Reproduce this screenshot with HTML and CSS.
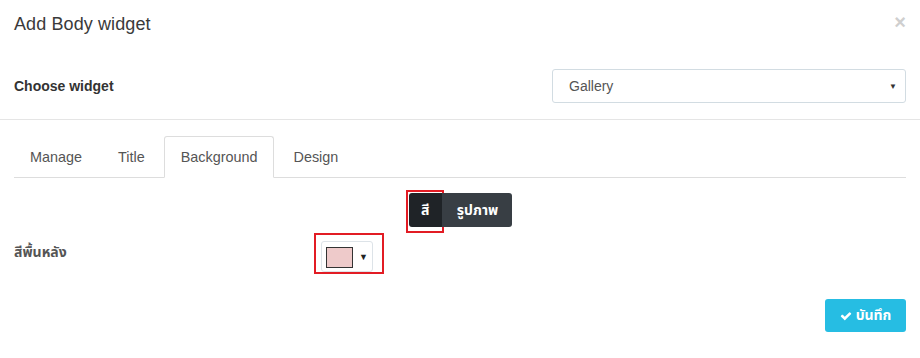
FILE: index.html
```html
<!DOCTYPE html>
<html>
<head>
<meta charset="utf-8">
<link rel="stylesheet" href="styles.css">
</head>
<body>
<div class="modal">
  <div class="header">
    <h4 class="title">Add Body widget</h4>
    <span class="close">×</span>
  </div>
  <div class="choose-row">
    <label class="label-bold">Choose widget</label>
    <div class="select"><span>Gallery</span><span class="caret">▼</span></div>
  </div>
  <div class="divider"></div>
  <div class="tab-area">
    <ul class="tabs">
      <li class="tab">Manage</li>
      <li class="tab">Title</li>
      <li class="tab active">Background</li>
      <li class="tab">Design</li>
    </ul>
    <div class="toggle-row">
      <div class="btn-group">
        <span class="btn btn-active">สี<span class="mark mark-btn"></span></span>
        <span class="btn">รูปภาพ</span>
      </div>
    </div>
    <div class="bg-row">
      <label class="label-thai">สีพื้นหลัง</label>
      <div class="picker">
        <span class="swatch"></span>
        <span class="picker-caret">▼</span>
        <span class="mark mark-picker"></span>
      </div>
    </div>
    <div class="footer">
      <button class="save"><svg class="check" viewBox="0 0 1792 1792" width="12" height="12"><path fill="#fff" d="M1671 566q0 40-28 68l-724 724-136 136q-28 28-68 28t-68-28l-136-136-362-362q-28-28-28-68t28-68l136-136q28-28 68-28t68 28l294 295 656-657q28-28 68-28t68 28l136 136q28 28 28 68z"/></svg><span>บันทึก</span></button>
    </div>
  </div>
</div>
</body>
</html>
```
FILE: styles.css
```css
* { box-sizing: border-box; }
html, body { margin: 0; padding: 0; background: #fff; }
body {
  font-family: "Liberation Sans", Arial, "Noto Sans Thai", "Tahoma", sans-serif;
  font-size: 14px;
  color: #333;
  width: 920px;
  height: 358px;
  overflow: hidden;
}
.modal { width: 920px; height: 358px; }
.header {
  display: flex;
  justify-content: space-between;
  align-items: flex-start;
  padding: 11px 14px 0 14px;
  height: 69px;
}
.title {
  margin: 0;
  font-size: 18px;
  font-weight: normal;
  line-height: 26px;
  color: #3a3a3a;
  letter-spacing: 0.1px;
}
.close {
  font-size: 20px;
  font-weight: bold;
  color: #cfcfcf;
  line-height: 21px;
  margin-top: 1px;
}
.choose-row {
  display: flex;
  justify-content: space-between;
  align-items: center;
  padding: 0 14px;
  height: 34px;
}
.label-bold { font-weight: bold; font-size: 14px; color: #333; }
.select {
  width: 354px;
  height: 34px;
  border: 1px solid #d2dce2;
  border-radius: 3px;
  display: flex;
  align-items: center;
  justify-content: space-between;
  padding: 0 8px 0 16px;
  color: #555;
  font-size: 14px;
}
.caret { font-size: 8px; color: #333; }
.divider {
  margin-top: 16px;
  height: 1px;
  background: #e5e5e5;
}
.tab-area { padding: 16px 14px 0 14px; }
.tabs {
  list-style: none;
  margin: 0;
  padding: 0;
  display: flex;
  border-bottom: 1px solid #ddd;
  height: 42px;
}
.tab {
  padding: 0 16px;
  line-height: 40px;
  color: #555;
  font-size: 14.4px;
  border: 1px solid transparent;
  border-radius: 3px 3px 0 0;
  margin-right: 2px;
}
.tab:first-child { margin-left: -1px; }
.tab.active {
  border-color: #ddd;
  border-bottom-color: #fff;
  background: #fff;
  height: 42px;
}
.toggle-row {
  display: flex;
  justify-content: center;
  margin-top: 15px;
  padding-left: 1px;
}
.btn-group { display: flex; }
.btn {
  position: relative;
  height: 34px;
  line-height: 34px;
  background: #383e44;
  color: #fff;
  font-weight: bold;
  font-size: 14px;
}
.btn:first-child {
  border-radius: 3px 0 0 3px;
  width: 33px;
  text-align: center;
}
.btn:last-child { border-radius: 0 3px 3px 0; padding: 0 14px 0 15px; }
.btn-active { background: #1f2327; }
.mark {
  position: absolute;
  border: 2px solid #e21c24;
  pointer-events: none;
}
.mark-btn { left: -3px; right: -2px; top: -3px; bottom: -6px; }
.bg-row {
  display: flex;
  align-items: flex-start;
  margin-top: 14px;
  height: 31px;
}
.label-thai {
  width: 307px;
  font-weight: bold;
  font-size: 14px;
  color: #555;
  line-height: 20px;
  padding-top: 1px;
}
.picker {
  position: relative;
  width: 52px;
  height: 31px;
  border: 1px solid #dde3e8;
  border-radius: 3px;
  display: flex;
  align-items: center;
  padding-left: 4px;
}
.swatch {
  width: 27px;
  height: 21px;
  background: #eecaca;
  border: 1px solid #333;
  margin-top: 1px;
}
.picker-caret { font-size: 9px; color: #222; margin-left: 6px; }
.mark-picker { left: -8px; right: -12px; top: -9px; bottom: -3px; }
.footer {
  display: flex;
  justify-content: flex-end;
  margin-top: 27px;
}
.save {
  height: 33px;
  width: 81px;
  border: none;
  border-radius: 3px;
  background: #26bde3;
  color: #fff;
  font-family: inherit;
  font-weight: bold;
  font-size: 14px;
  padding: 0;
  display: flex;
  align-items: center;
  justify-content: center;
  gap: 4px;
}
.check { display: block; }
```
